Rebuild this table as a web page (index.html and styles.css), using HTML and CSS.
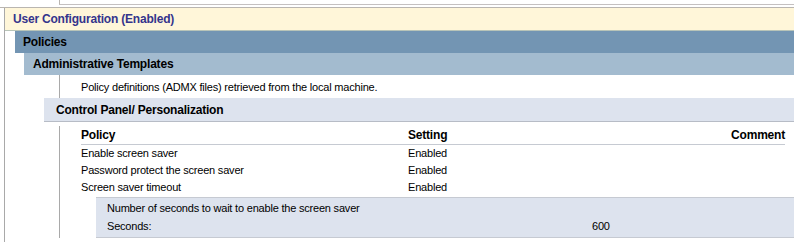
FILE: index.html
```html
<!DOCTYPE html>
<html lang="en">
<head>
    <meta charset="UTF-8">
    <title>Group Policy Report</title>
    <link rel="stylesheet" href="styles.css">
</head>
<body>
    <div class="top-strip">
        <div class="top-tick"></div>
    </div>

    <div class="report">
        <div class="bar bar-config">User Configuration (Enabled)</div>

        <div class="bar bar-policies">Policies</div>

        <div class="bar bar-admin">Administrative Templates</div>

        <div class="branch">
            <div class="desc">Policy definitions (ADMX files) retrieved from the local machine.</div>
        </div>

        <div class="bar bar-category">Control Panel/ Personalization</div>

        <div class="branch">
            <table class="policy-table">
                <thead>
                    <tr>
                        <th class="col-policy">Policy</th>
                        <th class="col-setting">Setting</th>
                        <th class="col-comment">Comment</th>
                    </tr>
                </thead>
                <tbody>
                    <tr><td>Enable screen saver</td><td>Enabled</td><td></td></tr>
                    <tr><td>Password protect the screen saver</td><td>Enabled</td><td></td></tr>
                    <tr><td>Screen saver timeout</td><td>Enabled</td><td></td></tr>
                </tbody>
            </table>

            <div class="sub-box">
                <div class="sub-row">Number of seconds to wait to enable the screen saver</div>
                <div class="sub-row">
                    <span class="sub-label">Seconds:</span>
                    <span class="sub-value">600</span>
                </div>
            </div>
        </div>
    </div>
</body>
</html>
```

FILE: styles.css
```css
* {
    margin: 0;
    padding: 0;
    box-sizing: border-box;
}

body {
    font-family: 'Liberation Sans', Arial, sans-serif;
    font-size: 11px;
    letter-spacing: -0.2px;
    color: #000;
    background: #fff;
    width: 794px;
    height: 242px;
    overflow: hidden;
}

/* top remains of the previous section */
.top-strip {
    height: 8px;
    border-bottom: 1px solid #b9b5b0;
}

.top-tick {
    margin-left: 59px;
    height: 5px;
    border-left: 1px solid #b9b5b0;
    border-bottom: 1px solid #c4c0c0;
}

.report {
    margin-left: 4px;
    border-left: 1px solid #a9a9a9;
    min-height: 234px;
}

.bar {
    font-weight: bold;
    font-size: 12px;
    height: 22px;
    line-height: 22px;
}

.bar-config {
    background: #fff6d9;
    color: #34348c;
    padding-left: 8px;
    border-bottom: 1px solid #b8c4b8;
    height: 23px;
}

.bar-policies {
    margin-left: 10px;
    background: #7395b3;
    padding-left: 8px;
}

.bar-admin {
    margin-left: 19px;
    background: #a3bbcf;
    padding-left: 9px;
}

.bar-category {
    margin-left: 39px;
    background: #dde3ee;
    padding-left: 12px;
    height: 24px;
    line-height: 24px;
    border-bottom: 1px solid #b7bcc6;
}

.branch {
    margin-left: 54px;
    border-left: 1px solid #a9a9a9;
}

.desc {
    padding-left: 21px;
    height: 23px;
    line-height: 25px;
}

.policy-table {
    margin-left: 21px;
    margin-top: 4px;
    width: 704px;
    border-collapse: collapse;
}

.policy-table th {
    font-weight: bold;
    font-size: 12px;
    text-align: left;
    height: 18px;
    line-height: 18px;
    border-bottom: 1px solid #c6cad2;
    padding: 0;
}

.policy-table td {
    height: 17px;
    line-height: 17px;
    padding: 0;
}

.col-policy {
    width: 327px;
}

.col-setting {
    width: 300px;
}

.policy-table th.col-comment {
    text-align: right;
}

.sub-box {
    margin-left: 36px;
    margin-top: 1px;
    background: #dde3ee;
    border-top: 1px solid #c6cad2;
    border-bottom: 1px solid #c6cad2;
    padding: 1px 0 2px 11px;
}

.sub-row {
    height: 18px;
    line-height: 18px;
    display: flex;
}

.sub-label {
    width: 485px;
}
```
